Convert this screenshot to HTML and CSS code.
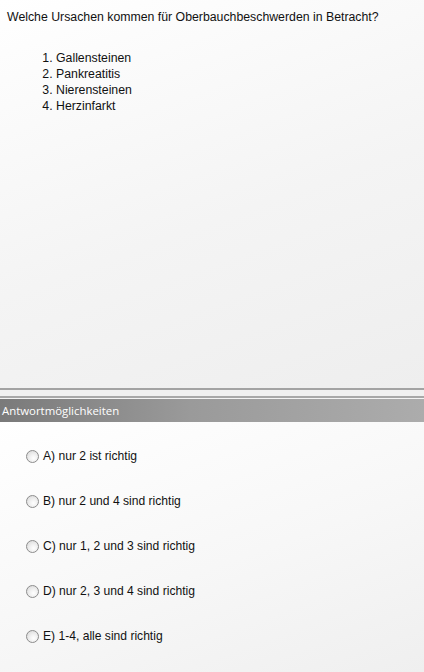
FILE: index.html
```html
<!DOCTYPE html>
<html lang="de">
<head>
<meta charset="utf-8">
<link rel="stylesheet" href="styles.css">
</head>
<body>
<div class="question">
  <p class="qtext">Welche Ursachen kommen für Oberbauchbeschwerden in Betracht?</p>
  <ol class="causes">
    <li>Gallensteinen</li>
    <li>Pankreatitis</li>
    <li>Nierensteinen</li>
    <li>Herzinfarkt</li>
  </ol>
</div>
<div class="divider"></div>
<div class="answers-head">Antwortmöglichkeiten</div>
<div class="answers">
  <label class="opt"><span class="radio"></span>A) nur 2 ist richtig</label>
  <label class="opt"><span class="radio"></span>B) nur 2 und 4 sind richtig</label>
  <label class="opt"><span class="radio"></span>C) nur 1, 2 und 3 sind richtig</label>
  <label class="opt"><span class="radio"></span>D) nur 2, 3 und 4 sind richtig</label>
  <label class="opt"><span class="radio"></span>E) 1-4, alle sind richtig</label>
</div>
</body>
</html>
```
FILE: styles.css
```css
html, body {
  margin: 0;
  padding: 0;
}
body {
  width: 424px;
  height: 672px;
  overflow: hidden;
  font-family: "Liberation Sans", Arial, sans-serif;
  font-size: 12px;
  color: #111;
  background: #f3f3f3;
}
.question {
  height: 388px;
  box-sizing: border-box;
  padding: 10px 7px 0;
  background: linear-gradient(160deg, #ffffff 0%, #f4f4f4 55%, #eeeeee 100%);
}
.qtext {
  margin: 0;
  line-height: 14px;
  font-size: 12.3px;
}
.causes {
  margin: 26px 0 0 0;
  padding-left: 49px;
  line-height: 16px;
  font-size: 12.3px;
}
.divider {
  border-top: 2px solid #a3a3a3;
  border-bottom: 2px solid #a8a8a8;
  background: #f0f0f0;
  height: 6px;
}
.answers-head {
  margin-top: 1px;
  height: 23px;
  line-height: 23px;
  padding-left: 2px;
  background: linear-gradient(to right, #7a7a7a 0%, #9a9a9a 45%, #acacac 100%);
  color: #fff;
  font-family: "Open Sans", "Noto Sans", sans-serif;
  font-size: 11.4px;
}
.answers {
  height: 250px;
  box-sizing: border-box;
  padding: 27px 0 0 26px;
  display: flex;
  flex-direction: column;
  gap: 31px;
  background: linear-gradient(160deg, #ffffff 0%, #f7f7f7 55%, #efefef 100%);
}
.opt {
  display: flex;
  align-items: center;
  height: 14px;
  line-height: 14px;
  font-size: 12.1px;
}
.radio {
  width: 11px;
  height: 11px;
  border: 1px solid #8c8c8c;
  border-radius: 50%;
  margin-right: 4px;
  background: radial-gradient(circle at 60% 65%, #ffffff 0%, #f0f0f0 40%, #d4d4d4 100%);
  flex: none;
}
```
